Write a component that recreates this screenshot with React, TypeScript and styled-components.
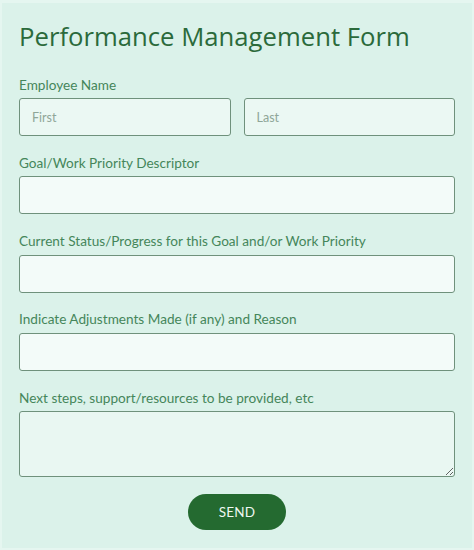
import React from 'react'
import styled, { createGlobalStyle } from 'styled-components'

const GlobalStyle = createGlobalStyle`
  html, body {
    margin: 0;
    padding: 0;
    background: #dbf2ea;
  }
  * {
    box-sizing: border-box;
  }
`

const Page = styled.form`
  width: 474px;
  height: 550px;
  padding: 19px 19px 0 19px;
  background: #dbf2ea;
  box-shadow: inset 0 3px 0 #e5f6f0, inset 2px 0 0 #e5f6f0, inset -2px 0 0 #e5f6f0, inset 0 -2px 0 #e5f6f0;
  font-family: 'Lato', 'Open Sans', sans-serif;
  display: flex;
  flex-direction: column;
`

const Title = styled.h1`
  margin: 0 0 20.5px 0;
  font-family: 'Open Sans', sans-serif;
  font-weight: 400;
  font-size: 25.7px;
  line-height: 36px;
  color: #2b6a3b;
`

const Field = styled.div`
  display: flex;
  flex-direction: column;
  gap: 4.5px;
  margin-bottom: 17.8px;
`

const Label = styled.label`
  font-size: 13.6px;
  line-height: 18px;
  color: #45865a;
`

const NameRow = styled.div`
  display: grid;
  grid-template-columns: 1fr 1fr;
  gap: 13px;
`

const Input = styled.input<{ $tint?: boolean }>`
  width: 100%;
  height: 38px;
  border: 1px solid #6f917c;
  border-radius: 3px;
  background: ${(p) => (p.$tint ? '#ebf8f3' : '#f3fbf9')};
  padding: 0 12px;
  font-family: 'Lato', sans-serif;
  font-size: 12.5px;
  color: #2b4a35;
  &::placeholder {
    color: #8fa698;
  }
`

const TextArea = styled.textarea`
  display: block;
  width: 100%;
  height: 66px;
  border: 1px solid #6f917c;
  border-radius: 3px;
  background: #e9f7f2;
  padding: 8px 12px;
  font-family: 'Lato', sans-serif;
  font-size: 13px;
  resize: vertical;
`

const Actions = styled.div`
  display: flex;
  justify-content: center;
  margin-top: -1px;
`

const SendButton = styled.button`
  width: 98px;
  height: 36px;
  border: none;
  border-radius: 18px;
  background: #246a30;
  color: #eef8f1;
  font-family: 'Lato', sans-serif;
  font-size: 13.5px;
  letter-spacing: 0.2px;
  cursor: pointer;
`

export default function App() {
  return (
    <>
      <GlobalStyle />
      <Page onSubmit={(e) => e.preventDefault()}>
        <Title>Performance Management Form</Title>
        <Field>
          <Label>Employee Name</Label>
          <NameRow>
            <Input $tint placeholder="First" />
            <Input $tint placeholder="Last" />
          </NameRow>
        </Field>
        <Field>
          <Label>Goal/Work Priority Descriptor</Label>
          <Input />
        </Field>
        <Field>
          <Label>Current Status/Progress for this Goal and/or Work Priority</Label>
          <Input />
        </Field>
        <Field>
          <Label>Indicate Adjustments Made (if any) and Reason</Label>
          <Input />
        </Field>
        <Field>
          <Label>Next steps, support/resources to be provided, etc</Label>
          <TextArea />
        </Field>
        <Actions>
          <SendButton type="submit">SEND</SendButton>
        </Actions>
      </Page>
    </>
  )
}
